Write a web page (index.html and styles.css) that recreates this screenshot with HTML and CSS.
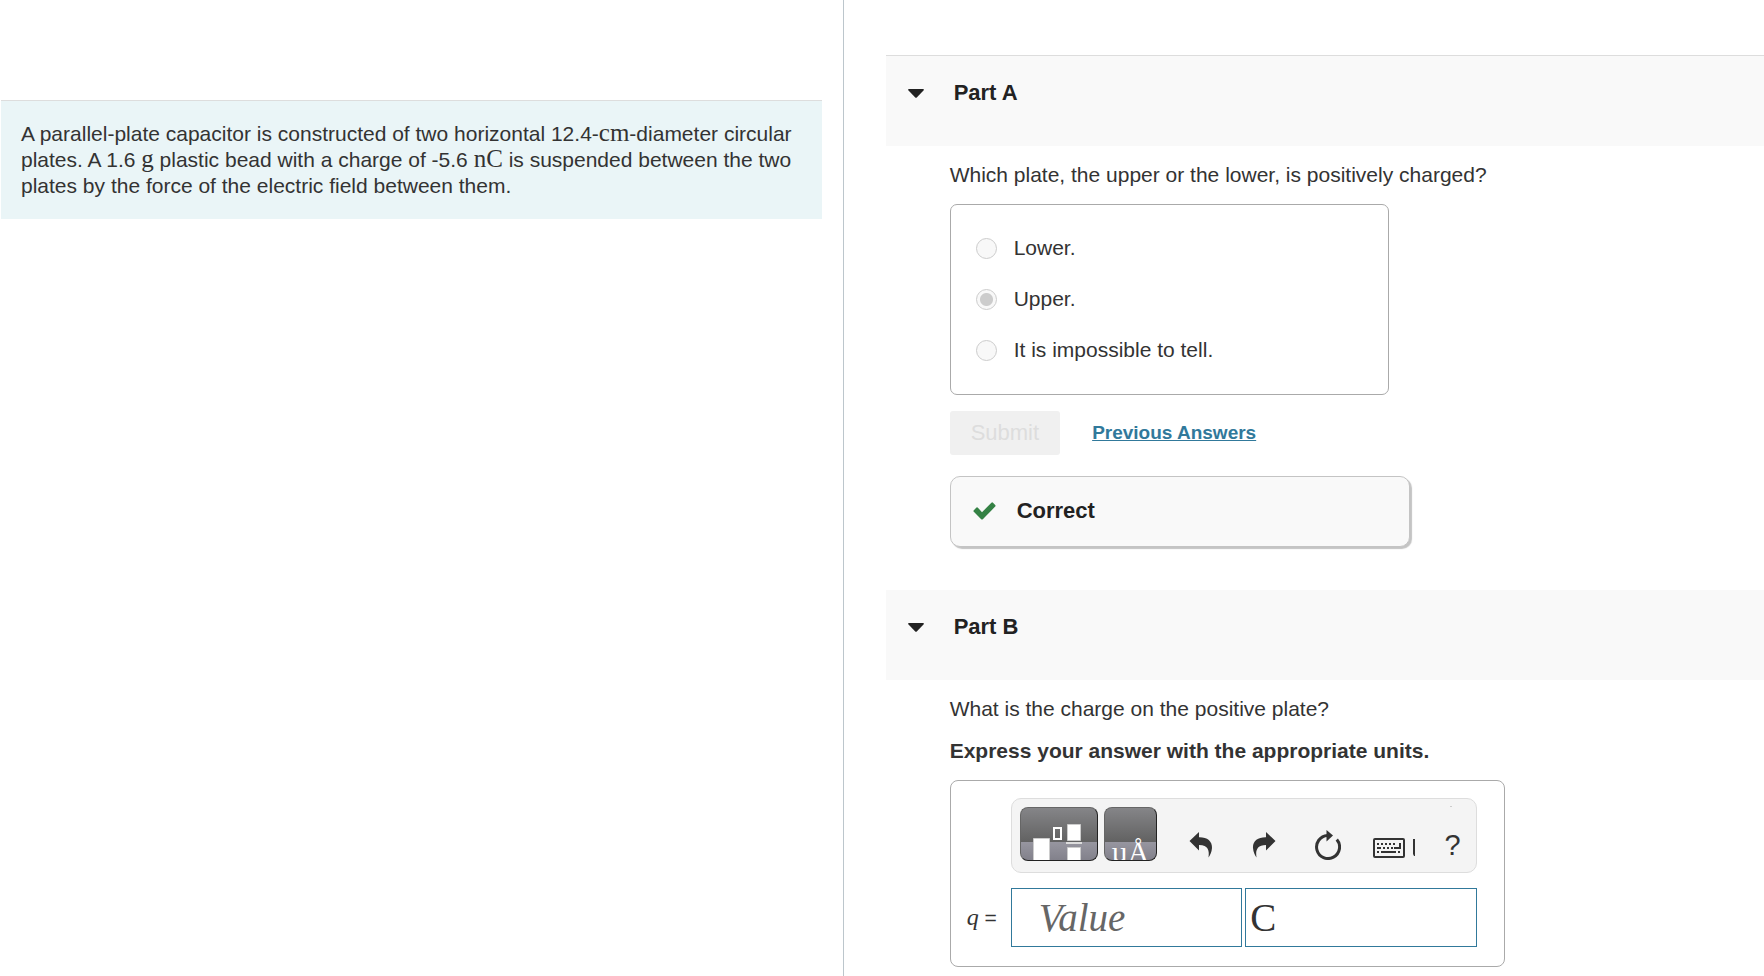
FILE: index.html
```html
<!DOCTYPE html>
<html lang="en">
<head>
  <meta charset="UTF-8">
  <title>Parallel-plate capacitor</title>
  <link rel="stylesheet" href="styles.css">
</head>
<body>
<aside class="intro">
  <p class="problem">A parallel-plate capacitor is constructed of two horizontal 12.4-<span class="unit">cm</span>-diameter circular plates. A 1.6 <span class="unit">g</span> plastic bead with a charge of -5.6 <span class="unit">nC</span> is suspended between the two plates by the force of the electric field between them.</p>
</aside>

<main class="parts">
  <section class="part">
    <header class="part-header is-first">
      <svg class="arrow" viewBox="0 0 16 9"><path d="M1 0H15Q16.500 .2 15.500 1.500L9 8.300Q8 9.300 7 8.300L.5 1.500Q-.5 .2 1 0Z"/></svg>
      <h2>Part A</h2>
    </header>
    <div class="part-body">
      <p class="question">Which plate, the upper or the lower, is positively charged?</p>
      <form>
        <div class="options">
          <label><input type="radio" name="plate" disabled>Lower.</label>
          <label><input type="radio" name="plate" checked disabled>Upper.</label>
          <label><input type="radio" name="plate" disabled>It is impossible to tell.</label>
        </div>
        <div class="actions">
          <button type="submit" class="submit" disabled>Submit</button>
          <a href="#" class="previous">Previous Answers</a>
        </div>
      </form>
      <div class="feedback">
        <svg class="check" viewBox="0 0 23 18"><path d="M3.500 5.500L.8 8.200Q0 9 .8 9.800L8.200 17.200Q9 18 9.800 17.200L22.200 4.600Q23 3.800 22.200 3L20 .7Q19.200 0 18.400 .7L9 10.200L5.100 5.900Q4.300 5 3.500 5.500Z"/></svg>
        <h3>Correct</h3>
      </div>
    </div>
  </section>

  <section class="part">
    <header class="part-header">
      <svg class="arrow" viewBox="0 0 16 9"><path d="M1 0H15Q16.500 .2 15.500 1.500L9 8.300Q8 9.300 7 8.300L.5 1.500Q-.5 .2 1 0Z"/></svg>
      <h2>Part B</h2>
    </header>
    <div class="part-body">
      <p class="question">What is the charge on the positive plate?</p>
      <p class="instruction">Express your answer with the appropriate units.</p>
      <form class="answer">
        <div class="toolbar">
          <button type="button" class="palette templates" aria-label="Templates">
            <svg width="76" height="52" viewBox="0 0 76 52">
              <path fill="#fff" stroke="#ccc" d="M12.500 30.500h16v24h-16zM46.500 16.500h13v16h-13zM46.500 39.500h13v16h-13z"/>
              <path fill="none" stroke="#fff" stroke-width="2" d="M33 20h7v11h-7z"/>
              <path fill="#ddd" d="M45 34h16v2h-16z"/>
            </svg>
          </button>
          <button type="button" class="palette symbols" aria-label="Symbols"><span>µÅ</span></button>
          <button type="button" class="tool" aria-label="Undo">
            <svg width="24" height="27" viewBox="0 0 24 27"><path d="M.5 10L10 1V6.200C18 6 23.500 10 23 17C22.700 21 21 24.500 19.500 26.500C20.500 20 19.500 14 10 14V19.500Z"/></svg>
          </button>
          <button type="button" class="tool" aria-label="Redo">
            <svg width="24" height="27" viewBox="0 0 24 27"><path d="M23.500 10L14 1V6.200C6 6 .5 10 1 17C1.300 21 3 24.500 4.500 26.500C3.500 20 4.500 14 14 14V19.500Z"/></svg>
          </button>
          <button type="button" class="tool" aria-label="Reset">
            <svg width="28" height="30" viewBox="0 0 28 30"><path fill="none" stroke="#333" stroke-width="3" d="M14.500 5.500A11.500 11.500 0 1 0 23.800 9.500"/><path d="M13.500 0L20 5.500L13.500 11.500Z"/></svg>
          </button>
          <button type="button" class="tool keyboard" aria-label="Keyboard">
            <svg width="44" height="20" viewBox="0 0 44 20">
              <path fill="none" stroke="#333" stroke-width="2" d="M2 1h28q1 0 1 1v16q0 1-1 1H2q-1 0-1-1V2q0-1 1-1z"/>
              <path fill="none" stroke="#333" stroke-width="2" d="M4 6h20" stroke-dasharray="2 2"/>
              <path fill="none" stroke="#333" stroke-width="2" d="M4 10h4M10 10h2M14 10h2M18 10h2M21 10h6V5M4 14h2M8 14h15M25 14h2"/>
              <path d="M40 1h2v17h-1l-1-2z"/>
            </svg>
          </button>
          <button type="button" class="tool help" aria-label="Help">?</button>
        </div>
        <label class="variable" for="value"><i>q</i> =</label>
        <div class="fields">
          <input type="text" id="value" class="value" placeholder="Value">
          <input type="text" class="units" value="C" aria-label="Units">
        </div>
      </form>
    </div>
  </section>
</main>
</body>
</html>
```
FILE: styles.css
```css
*{
  box-sizing: border-box;
}
body{
  display: grid;
  grid-template-columns: minmax(0, 11fr) minmax(0, 12fr);
  min-height: 100vh;
  margin: 0;
  font-family: "Liberation Sans", Arial, Helvetica, sans-serif;
  font-size: 21px;
  line-height: 26px;
  color: #333;
  background: #fff;
}
h2, h3, p{
  margin: 0;
}
button, input{
  font: inherit;
  margin: 0;
}

.intro{
  padding: 100px 21px 0 1px;
  border-right: 1px solid #bcc6cc;
}
.problem{
  padding: 20px;
  border-top: 1px solid #ddd;
  background: #eaf5f7;
}
.unit{
  font-family: "Liberation Serif", "Times New Roman", serif;
  font-size: 25px;
  line-height: 1px;
}

.parts{
  padding: 55px 0 10px 42px;
}
.part-header{
  display: flex;
  align-items: center;
  gap: 30px;
  padding: 24px 22px 40px;
  background: #f9f9f9;
}
.part-header.is-first{
  border-top: 1px solid #ddd;
}
.part-header h2, .feedback h3{
  font-size: 22px;
  font-weight: bold;
  color: #222;
}
.arrow{
  width: 16px;
  height: 9px;
  fill: #222;
}
.part-body{
  padding: 16px 24px 43px 64px;
}
.part:last-child .part-body{
  padding-bottom: 0;
}
.question{
  margin-bottom: 16px;
}

.options{
  display: flex;
  flex-direction: column;
  gap: 25px;
  max-width: 439px;
  padding: 30px 25px 31px;
  border: 1px solid #aaa;
  border-radius: 7px;
}
.options label{
  display: flex;
  align-items: center;
  gap: 17px;
}
.options input{
  appearance: none;
  width: 21px;
  height: 21px;
  border: 1px solid #ccc;
  border-radius: 50%;
  background: #f8f8f8;
}
.options input:checked{
  background: radial-gradient(circle, #ccc 6px, #f8f8f8 7px);
}

.actions{
  display: flex;
  align-items: center;
  gap: 32px;
  margin: 16px 0 21px;
}
.submit{
  padding: 9px 21px;
  border: 0;
  border-radius: 3px;
  background: #f0f0f0;
  color: #ddd;
  font-size: 22px;
}
.previous{
  font-size: 19px;
  font-weight: bold;
  color: #31799b;
}
.feedback{
  display: flex;
  align-items: center;
  gap: 21px;
  max-width: 460px;
  padding: 21px 22px 22px;
  border: 1px solid #c4c4c4;
  border-radius: 10px;
  background: #f9f9f9;
  box-shadow: 2px 2px 1px #c4c4c4;
}
.check{
  width: 23px;
  height: 18px;
  fill: #358245;
}

.instruction{
  margin-bottom: 16px;
  font-weight: bold;
}
.answer{
  display: grid;
  grid-template-columns: 44px minmax(0, 1fr);
  gap: 15px 0;
  align-items: center;
  max-width: 555px;
  padding: 17px 27px 19px 16px;
  border: 1px solid #aaa;
  border-radius: 8px;
}
.toolbar{
  grid-column: 2;
  display: flex;
  align-items: center;
  height: 75px;
  padding: 0 0 3px 8px;
  border: 1px solid #ddd;
  border-radius: 10px;
  background: #f4f4f4;
}
.palette{
  flex: none;
  height: 54px;
  padding: 0;
  overflow: hidden;
  border: 1px solid #222;
  border-top-color: #666;
  border-left-color: #666;
  border-radius: 8px;
  background: linear-gradient(#858588, #626262 65%, #9796a0 65%, #82818b);
  color: #fff;
}
.palette svg{
  display: block;
}
.templates{
  width: 78px;
  margin-right: 6px;
}
.symbols{
  width: 53px;
  margin-right: 13px;
}
.symbols span{
  display: block;
  height: 52px;
  padding-top: 31px;
  font-family: "Liberation Serif", "Times New Roman", serif;
  font-size: 29px;
}
.tool{
  position: relative;
  width: 63px;
  padding: 21px 0 0;
  border: 0;
  background: none;
  color: #333;
}
.tool svg{
  display: block;
  margin: 0 auto;
  fill: #333;
}
.keyboard{
  width: 72px;
  padding-top: 28px;
}
.help{
  width: 44px;
  font-size: 29px;
}
.help::before{
  content: "";
  position: absolute;
  top: -5px;
  left: 19px;
  width: 2px;
  height: 1px;
  background: #ccc;
}
.variable i{
  font-family: "Liberation Serif", "Times New Roman", serif;
  font-size: 24px;
}
.fields{
  display: grid;
  grid-template-columns: minmax(0, 1fr) minmax(0, 1fr);
  gap: 3px;
}
.fields input{
  width: 100%;
  height: 59px;
  border: 1px solid #31799b;
  background: #fff;
  font-family: "Liberation Serif", "Times New Roman", serif;
  font-size: 39px;
  color: #333;
}
.fields .value{
  padding: 0 27px;
}
.fields .value::placeholder{
  color: #666;
  font-style: italic;
}
.fields .units{
  padding: 0 4px;
}
```
